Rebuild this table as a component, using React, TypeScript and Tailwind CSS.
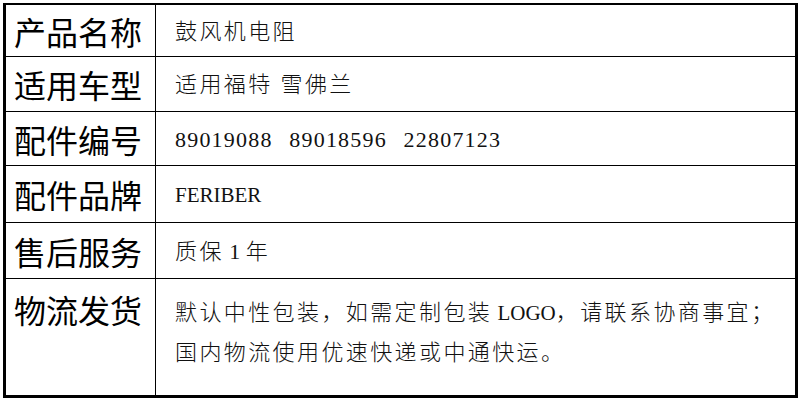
import React from 'react';

const labelFont = { fontFamily: '"Noto Sans CJK SC", "Noto Sans", sans-serif' };
const valueFont = { fontFamily: '"Liberation Serif", "Noto Sans CJK SC", serif' };

type Row = { label: string; height: string; value: React.ReactNode };

const rows: Row[] = [
    { label: '产品名称', height: 'h-[52px]', value: <span className="tracking-[2.4px]">鼓风机电阻</span> },
    { label: '适用车型', height: 'h-[55px]', value: <span className="tracking-[2.4px]">适用福特 雪佛兰</span> },
    {
        label: '配件编号',
        height: 'h-[54px]',
        value: <span className="tracking-[1.2px] [word-spacing:10px] text-[22px]">89019088 89018596 22807123</span>,
    },
    { label: '配件品牌', height: 'h-[57px]', value: <span className="text-[21px]">FERIBER</span> },
    {
        label: '售后服务',
        height: 'h-[56px]',
        value: (
            <span>
                <span className="tracking-[2.4px]">质保</span> 1 <span>年</span>
            </span>
        ),
    },
];

export default function App() {
    return (
        <div className="w-[800px] h-[400px] bg-white p-[3px]">
            <div className="w-[795px] h-[395px] flex flex-col border-black border-t-2 border-l-[3px] border-r-[3px] border-b-[3px] text-black">
                {rows.map((r) => (
                    <div key={r.label} className={`flex ${r.height} border-b border-black`}>
                        <div
                            className="w-[150px] shrink-0 border-r border-black flex items-center pl-[8px] text-[32px] leading-[32px]"
                            style={labelFont}
                        >
                            {r.label}
                        </div>
                        <div
                            className="flex-1 flex items-center pl-[19px] text-[22px] leading-[24px] pt-[2px] font-light text-[#111]"
                            style={valueFont}
                        >
                            {r.value}
                        </div>
                    </div>
                ))}
                {/* 物流发货 - taller row, content sits at the top */}
                <div className="flex flex-1">
                    <div
                        className="w-[150px] shrink-0 border-r border-black pl-[8px] pt-[14px] text-[32px] leading-[32px]"
                        style={labelFont}
                    >
                        物流发货
                    </div>
                    <div className="flex-1 pl-[19px] pt-[14px] text-[22px] leading-[39px] font-light text-[#111]" style={valueFont}>
                        <div className="tracking-[2.4px] whitespace-nowrap">
                            默认中性包装，如需定制包装<span className="tracking-normal text-[21px]"> LOGO</span>，请联系协商事宜；
                        </div>
                        <div className="tracking-[2.4px] whitespace-nowrap">国内物流使用优速快递或中通快运。</div>
                    </div>
                </div>
            </div>
        </div>
    );
}
